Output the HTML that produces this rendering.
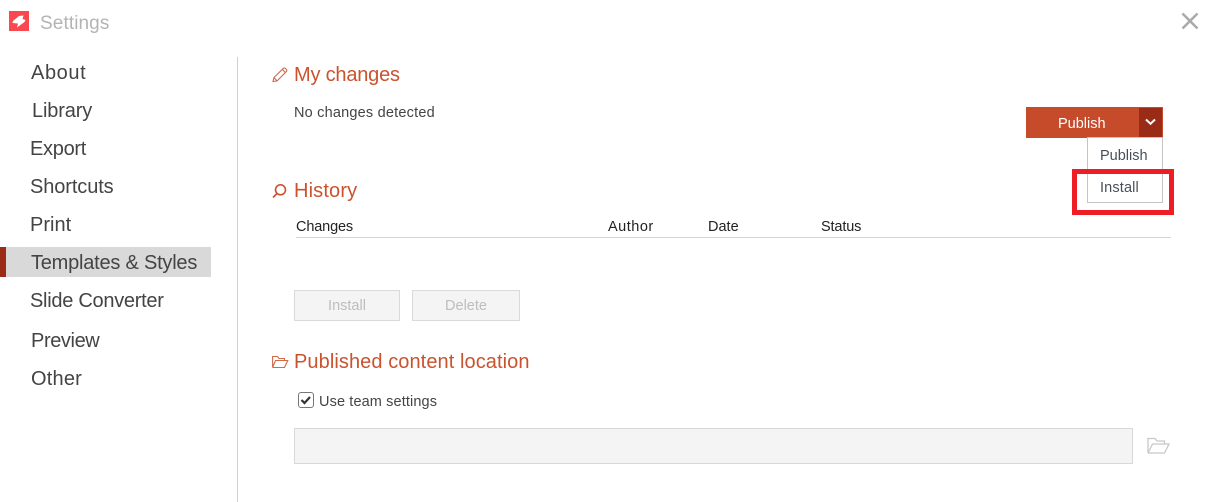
<!DOCTYPE html>
<html><head><meta charset="utf-8">
<style>
html,body{margin:0;padding:0;background:#fff}
#p{position:relative;width:1209px;height:502px;overflow:hidden;background:#fff;font-family:"Liberation Sans",sans-serif}
#p div{position:absolute}
.t{white-space:nowrap;line-height:20px;height:20px}
.n{font-size:20px;color:#444}
.h{font-size:20px;color:#c9532f}
.s{font-size:14.5px;color:#444}
svg{position:absolute;overflow:visible}
</style></head><body>
<div id="p">
<div style="left:9px;top:11px;width:20px;height:20px;background:#f9484f"></div>
<svg style="left:9px;top:11px" width="20" height="20"><path d="M10 5 L14.5 4.5 L13.5 8 L16.5 9 L15.5 11 L8 16.5 L9 12.5 L3.5 12 L4 10 Z" fill="#fff"/></svg>
<div class="t" style="left:40px;top:14px;font-size:19px;color:#b4b4b4;letter-spacing:.1px">Settings</div>
<svg style="left:1181px;top:12px" width="18" height="18"><path d="M1.5 1.5 L16.5 16.5 M16.5 1.5 L1.5 16.5" stroke="#aaa" stroke-width="2.5" fill="none"/></svg>

<div class="t n" style="left:31px;top:63px;letter-spacing:.6px">About</div>
<div class="t n" style="left:32px;top:101px;letter-spacing:-.15px">Library</div>
<div class="t n" style="left:30px;top:139px;letter-spacing:-.3px">Export</div>
<div class="t n" style="left:30px;top:177px;letter-spacing:-.1px">Shortcuts</div>
<div class="t n" style="left:30px;top:215px">Print</div>
<div style="left:0;top:247px;width:211px;height:30px;background:#d9d9d9"></div>
<div style="left:0;top:247px;width:6px;height:30px;background:#9a2c17"></div>
<div class="t n" style="left:31px;top:253px;letter-spacing:-.22px">Templates &amp; Styles</div>
<div class="t n" style="left:30px;top:291px;letter-spacing:-.28px">Slide Converter</div>
<div class="t n" style="left:31px;top:331px;letter-spacing:-.4px">Preview</div>
<div class="t n" style="left:31px;top:369px;letter-spacing:.2px">Other</div>
<div style="left:237px;top:57px;width:1px;height:445px;background:#d0d0d0"></div>

<svg style="left:272px;top:67px" width="16" height="16" fill="none" stroke="#cf6a4c" stroke-width="1.1"><path d="M1 14.5 L2 10.5 L11.5 1.2 Q12.5 .6 13.6 1.6 L14.5 2.6 Q15.2 3.6 14.3 4.6 L5 14 Z M2 10.5 L5 14 M10.5 2.5 L13.3 5.5"/></svg>
<div class="t h" style="left:294px;top:65px;letter-spacing:-.2px">My changes</div>
<div class="t s" style="left:294px;top:103px;letter-spacing:.2px">No changes detected</div>

<div style="left:1026px;top:107px;width:137px;height:31px;background:#c54b2b"></div>
<div style="left:1139px;top:108px;width:23px;height:29px;background:#9a2c17"></div>
<svg style="left:1145px;top:118px" width="12" height="8"><path d="M1 1.5 L5.5 5.8 L10 1.5" stroke="#fff" stroke-width="2" fill="none"/></svg>
<div class="t" style="left:1058px;top:114px;font-size:14.5px;color:#fff">Publish</div>

<div style="left:1087px;top:137px;width:74px;height:64px;border:1px solid #c4c4c4;background:#fff"></div>
<div class="t s" style="left:1100px;top:146px;color:#46505a">Publish</div>
<div class="t s" style="left:1100px;top:178px;color:#46505a;letter-spacing:.15px">Install</div>
<div style="left:1072px;top:169px;width:92px;height:36px;border:5px solid #ee1c25"></div>

<svg style="left:272px;top:183px" width="16" height="16" fill="none" stroke="#c9532f" stroke-width="1.6"><circle cx="8.5" cy="6.8" r="5"/><path d="M5 10.5 L1 14.5"/></svg>
<div class="t h" style="left:294px;top:181px;letter-spacing:.15px">History</div>
<div class="t s" style="left:296px;top:217px;color:#222;letter-spacing:-.15px">Changes</div>
<div class="t s" style="left:608px;top:217px;color:#222;letter-spacing:.5px">Author</div>
<div class="t s" style="left:708px;top:217px;color:#222">Date</div>
<div class="t s" style="left:821px;top:217px;color:#222;letter-spacing:-.15px">Status</div>
<div style="left:296px;top:237px;width:875px;height:1px;background:#d4d4d4"></div>

<div class="t" style="left:294px;top:290px;width:104px;height:29px;line-height:31px;border:1px solid #dadada;background:#f4f4f4;color:#bdbdbd;font-size:14.5px;text-align:center">Install</div>
<div class="t" style="left:412px;top:290px;width:106px;height:29px;line-height:31px;border:1px solid #dadada;background:#f4f4f4;color:#bdbdbd;font-size:14.5px;text-align:center">Delete</div>

<svg style="left:272px;top:355px" width="17" height="14" fill="none" stroke="#cf6a4c" stroke-width="1.1"><path d="M.6 12.5 V1.5 H5.5 L7 3.5 H12.5 V5.5 M.6 12.5 H12.5 L15.8 5.5 H3.5 L.6 12.5"/></svg>
<div class="t h" style="left:294px;top:352px;letter-spacing:.08px">Published content location</div>

<div style="left:298px;top:392px;width:14px;height:14px;border:1px solid #777;border-radius:3px;background:#fff"></div>
<svg style="left:298px;top:392px" width="16" height="16"><path d="M3.5 8 L6.5 11 L12 5" stroke="#333" stroke-width="2.2" fill="none"/></svg>
<div class="t s" style="left:319px;top:392px;letter-spacing:.12px">Use team settings</div>

<div style="left:294px;top:428px;width:837px;height:34px;border:1px solid #d8d8d8;background:#f4f4f4"></div>
<svg style="left:1147px;top:437px" width="24" height="18" fill="none" stroke="#c8c8c8" stroke-width="1.3"><path d="M1 16 V1.5 H8 L10 4 H17.5 V7 M1 16 H17.5 L22 7 H5.5 L1 16"/></svg>
</div>
</body></html>
